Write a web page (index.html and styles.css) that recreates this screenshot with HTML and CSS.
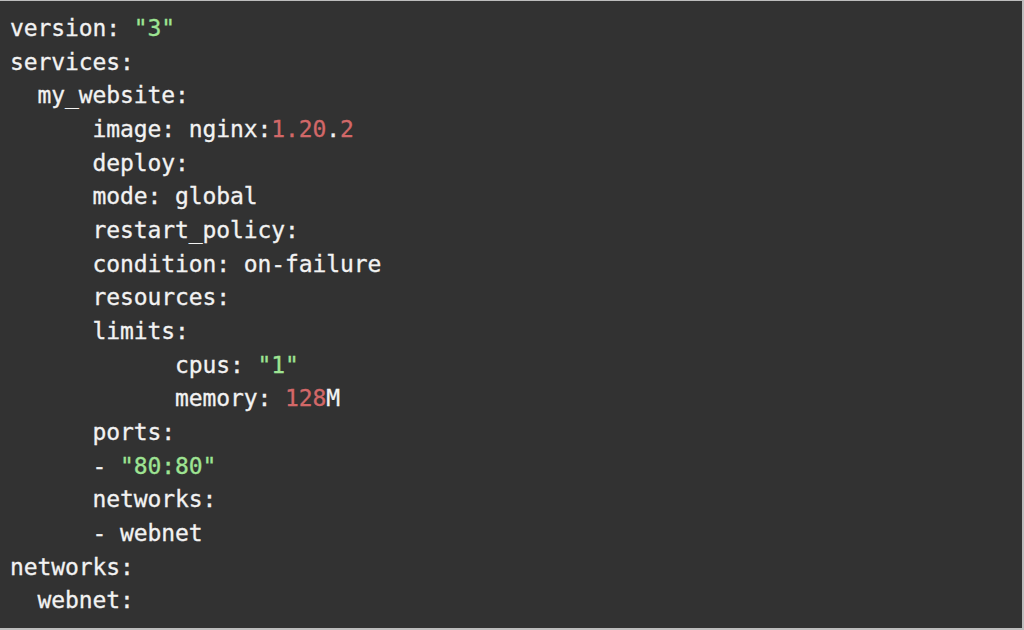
FILE: index.html
```html
<!DOCTYPE html>
<html>
<head>
<meta charset="utf-8">
<link rel="stylesheet" href="styles.css">
</head>
<body>
<div class="frame">
<pre class="code">version: <span class="str">"3"</span>
services:
  my_website:
      image: nginx:<span class="num">1.20</span>.<span class="num">2</span>
      deploy:
      mode: global
      restart_policy:
      condition: on-failure
      resources:
      limits:
            cpus: <span class="str">"1"</span>
            memory: <span class="num">128</span>M
      ports:
      - <span class="str">"80:80"</span>
      networks:
      - webnet
networks:
  webnet:
</pre>
</div>
</body>
</html>
```

FILE: styles.css
```css
html, body {
  margin: 0;
  padding: 0;
  background: #bdbdbd;
}
.frame {
  box-sizing: border-box;
  width: 1024px;
  height: 630px;
  background: #323232;
  border-top: 1px solid #bdbdbd;
  border-right: 2px solid #bdbdbd;
  border-bottom: 2px solid #bdbdbd;
  overflow: hidden;
}
.code {
  margin: 0;
  padding: 11px 0 0 10px;
  font-family: "DejaVu Sans Mono", monospace;
  font-size: 23px;
  letter-spacing: -0.1px;
  line-height: 33.65px;
  color: #f2f2f2;
  -webkit-text-stroke: 0.3px #f2f2f2;
}
.str {
  color: #9ee493;
  -webkit-text-stroke-color: #9ee493;
}
.num {
  color: #d26868;
  -webkit-text-stroke-color: #d26868;
}
```
